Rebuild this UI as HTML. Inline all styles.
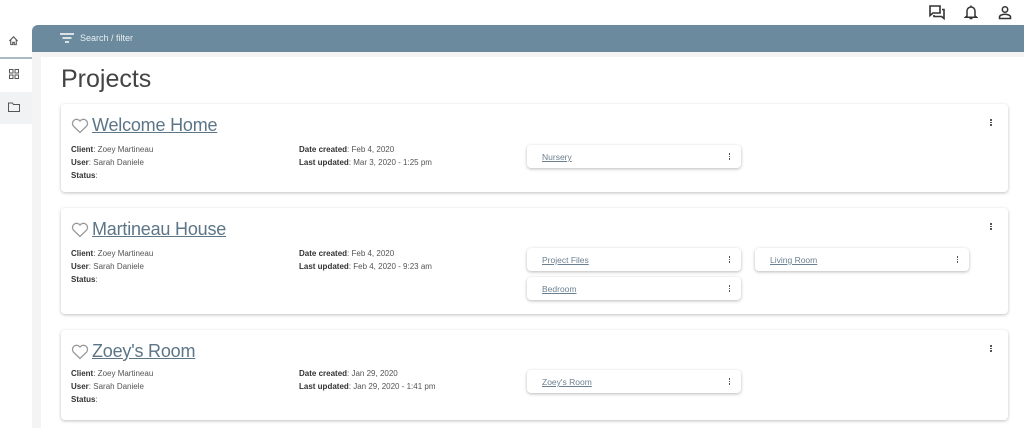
<!DOCTYPE html>
<html><head><style>
*{box-sizing:border-box;margin:0;padding:0}
body{width:1024px;height:428px;overflow:hidden;background:#fff;font-family:"Liberation Sans",sans-serif;color:#333;position:relative}
.abs{position:absolute}
.bar{left:32px;top:25px;width:992px;height:27px;background:#6b8a9e;border-top-left-radius:6px}
.bar span{position:absolute;left:48px;top:8px;font-size:9px;color:#e8eef2}
.side{left:0;top:25px;width:32px;height:403px;background:#fff}
.main{left:32px;top:52px;width:992px;height:376px;background:#f4f4f4}
.panel{left:41px;top:57px;width:983px;height:371px;background:#fff}
h1{position:absolute;left:61px;top:65px;font-size:25px;font-weight:normal;color:#444}
.card{position:absolute;left:61px;width:947px;background:#fff;border-radius:4px;box-shadow:0 1px 3px rgba(0,0,0,.25)}
.title{position:absolute;left:31px;top:11px;font-size:18px;letter-spacing:-0.2px;color:#5c7587;text-decoration:underline}
.heart{position:absolute;left:10px;top:14px}
.info{position:absolute;font-size:8px;line-height:13px;color:#555}
.info b{color:#333}
.dots{position:absolute;right:16px;top:15px;width:2px}
.dots i,.tile .d i{display:block;width:1.5px;height:1.5px;background:#555;margin-bottom:1px}
.tile{position:absolute;width:214px;height:23px;background:#fff;border-radius:4px;box-shadow:0 1px 3px rgba(0,0,0,.28);font-size:8.5px;color:#6b8090}
.tile u{position:absolute;left:15px;top:7px}
.tile .d{position:absolute;right:11px;top:8px}
</style></head><body>
<div class="abs side"></div>
<div class="abs main"></div>
<div class="abs panel"></div>
<div class="abs" style="left:0;top:57px;width:32px;height:2px;background:#a9bac5"></div>
<div class="abs" style="left:0;top:92px;width:32px;height:32px;background:#f1f2f3"></div>
<svg class="abs" style="left:8px;top:35px" width="11" height="11" viewBox="0 0 12 12" fill="none" stroke="#555" stroke-width="1.2"><path d="M1.5 6.5L6 2l4.5 4.5M3 5v5.5h2.2V8h1.6v2.5H9V5"/></svg>
<svg class="abs" style="left:9px;top:69px" width="10" height="10" viewBox="0 0 10 10" fill="none" stroke="#555" stroke-width="1"><rect x="0.5" y="0.5" width="3.5" height="3.5"/><rect x="6" y="0.5" width="3.5" height="3.5"/><rect x="0.5" y="6" width="3.5" height="3.5"/><rect x="6" y="6" width="3.5" height="3.5"/></svg>
<svg class="abs" style="left:8px;top:102px" width="12" height="10" viewBox="0 0 12 10" fill="none" stroke="#555" stroke-width="1"><path d="M.5 1h4l1 1.5h6V9.5H.5z"/></svg>
<div class="abs bar"><svg style="position:absolute;left:28px;top:8px" width="14" height="11" viewBox="0 0 14 11" stroke="#fff" stroke-width="1.4"><path d="M0 1h14M2.5 5h9M5 9h4"/></svg><span>Search / filter</span></div>
<svg class="abs" style="left:929px;top:5px" width="16" height="15" viewBox="0 0 16 15" fill="none" stroke="#333" stroke-width="1.6"><path d="M1 1h10v7H4l-3 2.5zM13 4.5h2v9l-2.5-2H5V10"/></svg>
<svg class="abs" style="left:964px;top:4px" width="14" height="16" viewBox="0 0 14 16" fill="none" stroke="#333" stroke-width="1.5"><path d="M3 12V7a4 4 0 018 0v5l1.5 1.2h-11zM5.5 14.5h3M7 1.5v1"/></svg>
<svg class="abs" style="left:998px;top:5px" width="14" height="15" viewBox="0 0 14 15" fill="none" stroke="#333" stroke-width="1.5"><circle cx="7" cy="4.5" r="2.7"/><path d="M1.5 13.5v-1.5c0-1.5 2.5-2.8 5.5-2.8s5.5 1.3 5.5 2.8v1.5z"/></svg>
<h1>Projects</h1>

<div class="card" style="top:104px;height:88px">
<svg class="heart" width="18" height="16" viewBox="0 0 18 16" fill="none" stroke="#999" stroke-width="1.3"><path d="M9 14.5L2.3 8A4 4 0 019 3a4 4 0 016.7 5z"/></svg>
<div class="title">Welcome Home</div>
<div class="dots"><i></i><i></i><i></i></div>
<div class="info" style="left:10px;top:39px"><b>Client</b>: Zoey Martineau<br><b>User</b>: Sarah Daniele<br><b>Status</b>:</div>
<div class="info" style="left:238px;top:39px"><b>Date created</b>: Feb 4, 2020<br><b>Last updated</b>: Mar 3, 2020 - 1:25 pm</div>
<div class="tile" style="left:466px;top:41px"><u>Nursery</u><div class="d"><i></i><i></i><i></i></div></div>
</div>

<div class="card" style="top:208px;height:106px">
<svg class="heart" width="18" height="16" viewBox="0 0 18 16" fill="none" stroke="#999" stroke-width="1.3"><path d="M9 14.5L2.3 8A4 4 0 019 3a4 4 0 016.7 5z"/></svg>
<div class="title">Martineau House</div>
<div class="dots"><i></i><i></i><i></i></div>
<div class="info" style="left:10px;top:39px"><b>Client</b>: Zoey Martineau<br><b>User</b>: Sarah Daniele<br><b>Status</b>:</div>
<div class="info" style="left:238px;top:39px"><b>Date created</b>: Feb 4, 2020<br><b>Last updated</b>: Feb 4, 2020 - 9:23 am</div>
<div class="tile" style="left:466px;top:40px"><u>Project Files</u><div class="d"><i></i><i></i><i></i></div></div>
<div class="tile" style="left:694px;top:40px"><u>Living Room</u><div class="d"><i></i><i></i><i></i></div></div>
<div class="tile" style="left:466px;top:69px"><u>Bedroom</u><div class="d"><i></i><i></i><i></i></div></div>
</div>

<div class="card" style="top:330px;height:90px">
<svg class="heart" width="18" height="16" viewBox="0 0 18 16" fill="none" stroke="#999" stroke-width="1.3"><path d="M9 14.5L2.3 8A4 4 0 019 3a4 4 0 016.7 5z"/></svg>
<div class="title">Zoey's Room</div>
<div class="dots"><i></i><i></i><i></i></div>
<div class="info" style="left:10px;top:37px"><b>Client</b>: Zoey Martineau<br><b>User</b>: Sarah Daniele<br><b>Status</b>:</div>
<div class="info" style="left:238px;top:37px"><b>Date created</b>: Jan 29, 2020<br><b>Last updated</b>: Jan 29, 2020 - 1:41 pm</div>
<div class="tile" style="left:466px;top:40px"><u>Zoey's Room</u><div class="d"><i></i><i></i><i></i></div></div>
</div>
</body></html>
